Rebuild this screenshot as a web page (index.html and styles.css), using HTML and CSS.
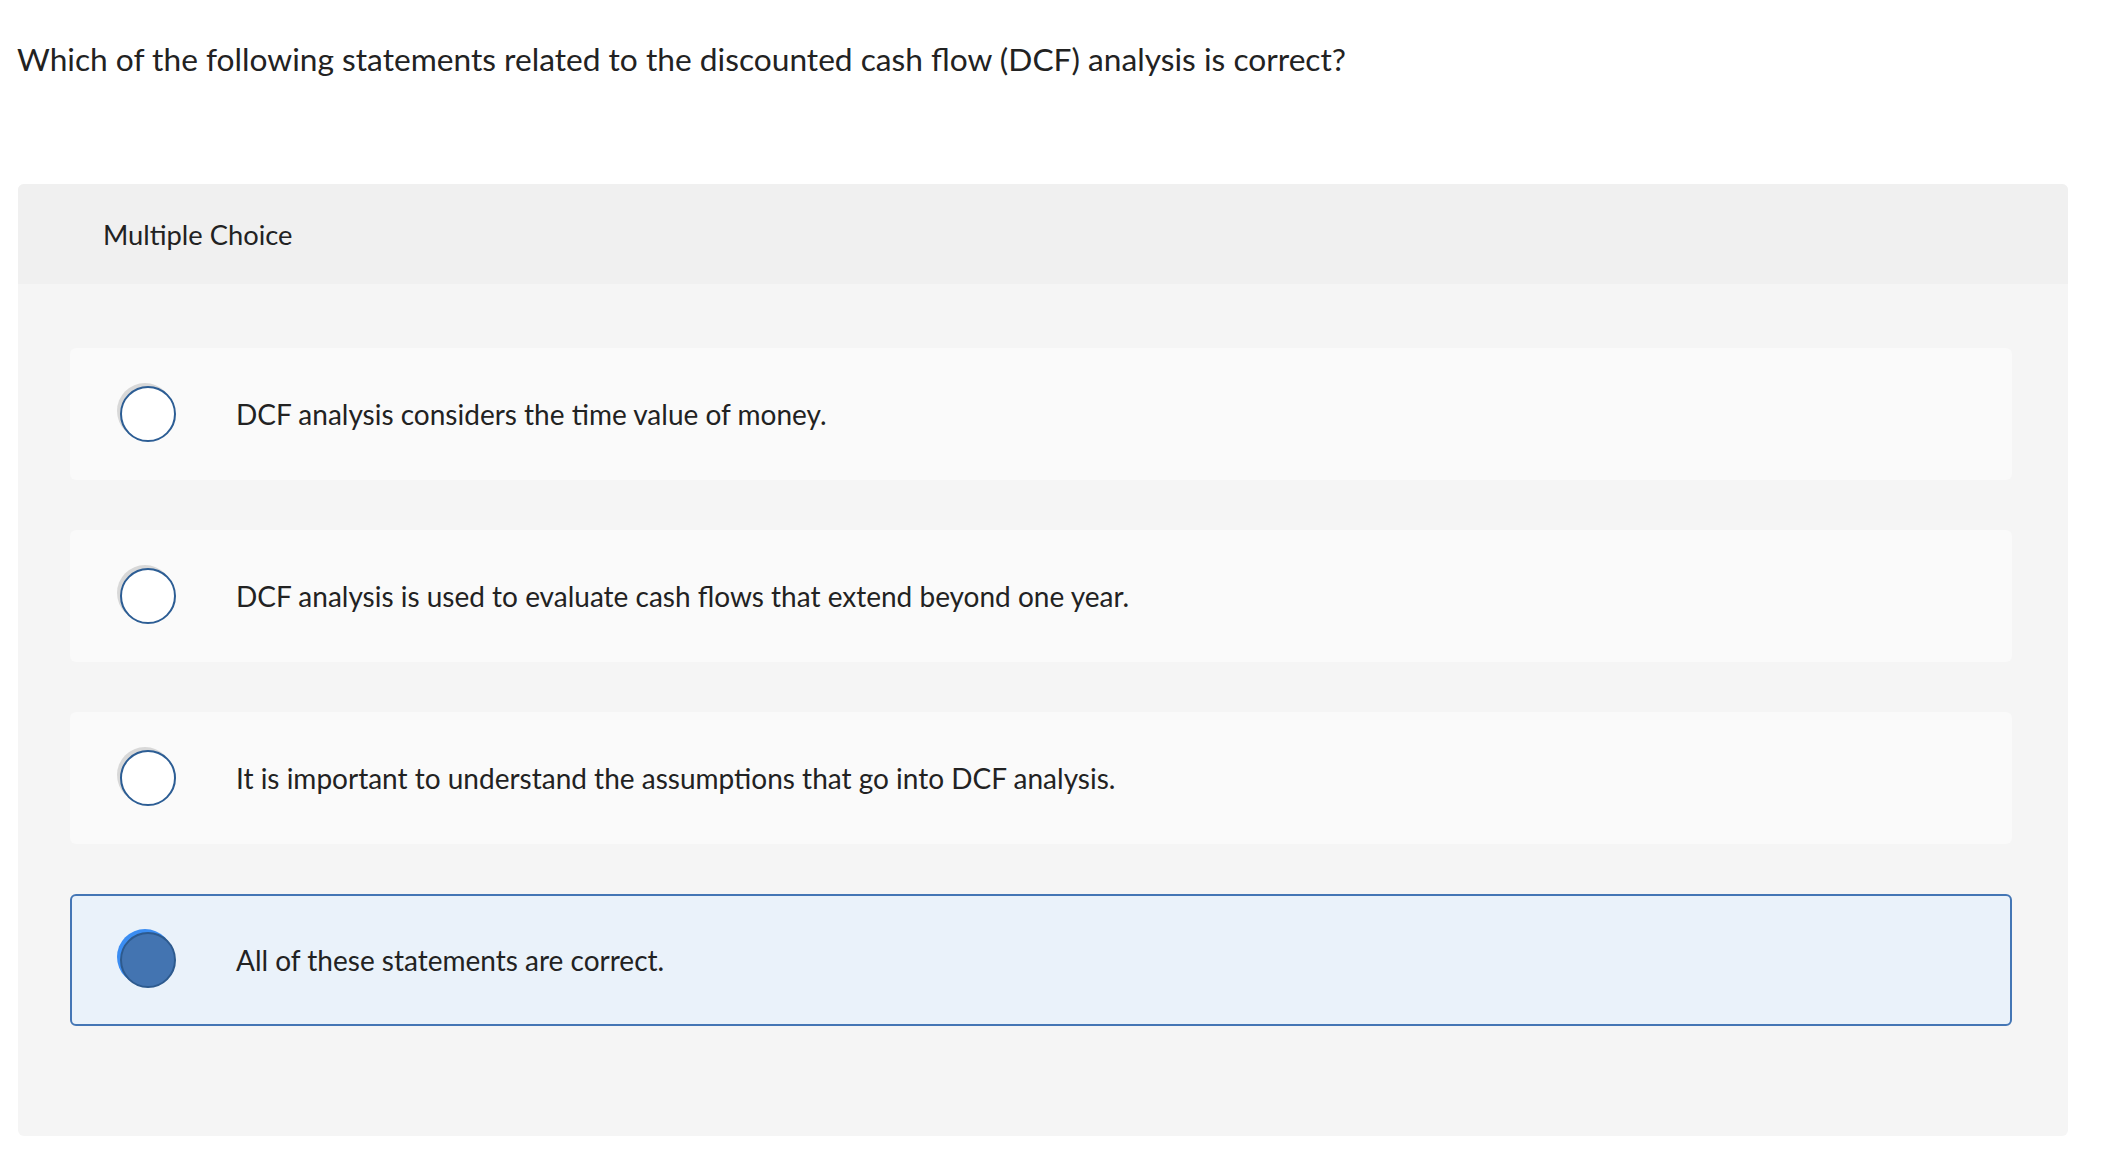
FILE: index.html
```html
<!DOCTYPE html>
<html lang="en">
<head>
  <meta charset="UTF-8">
  <title>Multiple Choice Question</title>
  <link rel="stylesheet" href="styles.css">
</head>
<body>
  <p class="question">Which of the following statements related to the discounted cash flow (DCF) analysis is correct?</p>

  <div class="panel">
    <div class="panel-header">Multiple Choice</div>

    <div class="panel-body">
      <label class="option">
        <span class="radio"></span>
        <span class="option-text">DCF analysis considers the time value of money.</span>
      </label>

      <label class="option">
        <span class="radio"></span>
        <span class="option-text">DCF analysis is used to evaluate cash flows that extend beyond one year.</span>
      </label>

      <label class="option">
        <span class="radio"></span>
        <span class="option-text">It is important to understand the assumptions that go into DCF analysis.</span>
      </label>

      <label class="option option-selected">
        <span class="radio"></span>
        <span class="option-text">All of these statements are correct.</span>
      </label>
    </div>
  </div>
</body>
</html>
```

FILE: styles.css
```css
body {
  margin: 0;
  background-color: #fff;
  color: #222;
  font-family: Lato, "Liberation Sans", sans-serif;
}

.question {
  margin: 0;
  padding: 39px 0 0 17px;
  height: 184px;
  box-sizing: border-box;
  font-size: 31.7px;
  line-height: 40px;
}

.panel {
  margin: 0 42px 0 18px;
  border-radius: 6px;
  overflow: hidden;
  background-color: #f5f5f5;
}

.panel-header {
  height: 100px;
  padding-left: 85px;
  display: flex;
  align-items: center;
  background-color: #f0f0f0;
  font-size: 27.3px;
}

.panel-body {
  display: flex;
  flex-direction: column;
  gap: 50px;
  padding: 64px 56px 110px 52px;
}

.option {
  height: 132px;
  box-sizing: border-box;
  display: flex;
  align-items: center;
  padding-left: 50px;
  border: 2px solid transparent;
  border-radius: 6px;
  background-color: #fafafa;
  font-size: 28px;
  cursor: pointer;
}

.radio {
  width: 56px;
  height: 56px;
  box-sizing: border-box;
  flex-shrink: 0;
  margin-left: -2px;
  border: 2px solid #2c5d94;
  border-radius: 50%;
  background-color: #fff;
  box-shadow: -3px -3px 0 0 #d8d8d8;
}

.option-text {
  margin-left: 60px;
}

.option-selected {
  border-color: #4476b5;
  background-color: #eaf2fa;
}

.option-selected .radio {
  border-color: #2d5a8e;
  background-color: #4374b1;
  box-shadow: -3px -3px 0 0 #3b8df2;
}
```
